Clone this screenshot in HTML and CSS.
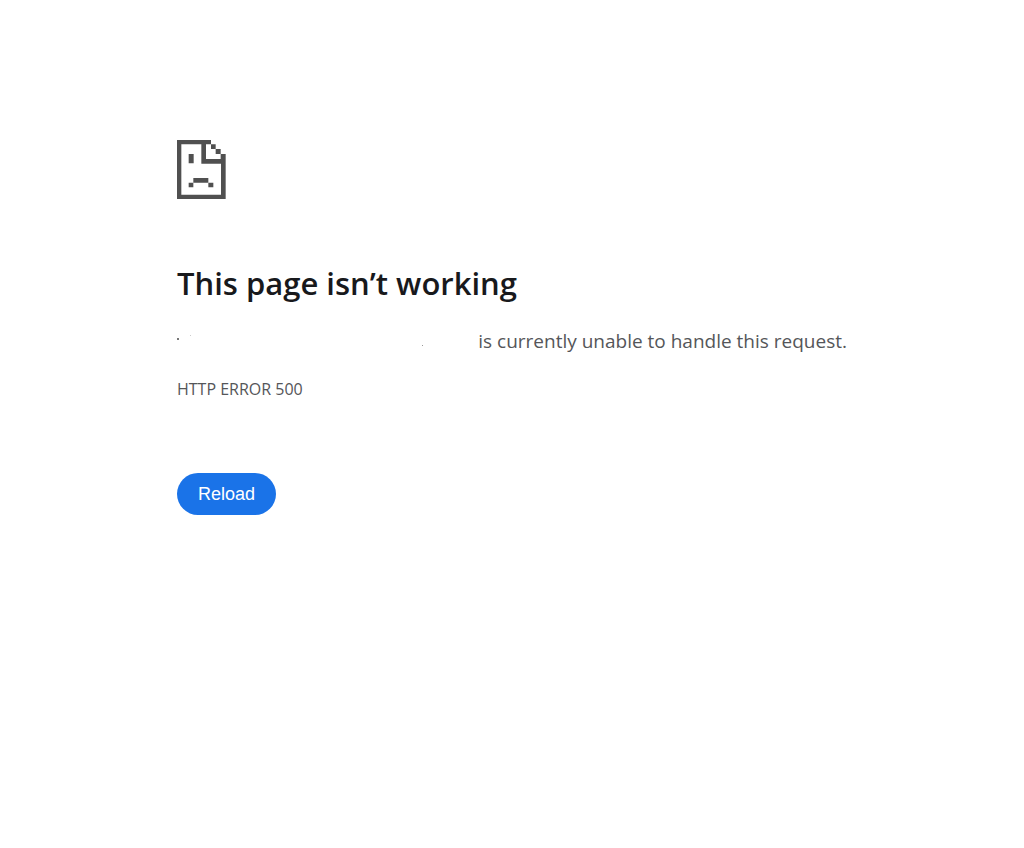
FILE: index.html
```html
<!DOCTYPE html>
<html lang="en">
<head>
<meta charset="utf-8">
<meta name="viewport" content="width=device-width, initial-scale=1">
<title>This page isn’t working</title>
<link rel="stylesheet" href="styles.css">
</head>
<body>
<main class="error-page">
  <svg class="error-icon" viewBox="0 0 147 177" aria-hidden="true">
    <path fill="#505050" d="M0 0H102V13H116V27H131V42H146V177H0ZM13 13V164H132V71H73V13ZM87 13V57H131V42H116V27H102V13Z" fill-rule="evenodd"/>
    <path fill="#505050" d="M35 42H50V70H35ZM49 114H94V128H109V142H94V128H49V142H35V128H49Z"/>
  </svg>
  <h1 class="title">This page isn’t working</h1>
  <p class="summary">
    <svg class="host" viewBox="0 0 290 28" aria-hidden="true">
      <path fill="#777" d="M0 11h2v2h-2z"/>
      <path fill="#ccc" d="M13 8h1v1h-1z"/>
      <path fill="#999" d="M245 18h1v1h-1z"/>
    </svg>
    <span>is currently unable to handle this request.</span>
  </p>
  <p class="code">HTTP ERROR 500</p>
  <button class="reload" type="button">Reload</button>
</main>
</body>
</html>
```
FILE: styles.css
```css
* { box-sizing: border-box; }

body {
  margin: 0;
  background: #fff;
  color: #555659;
  font-family: "Segoe UI", "Open Sans", "Noto Sans", sans-serif;
}

.error-page {
  display: flex;
  flex-direction: column;
  align-items: flex-start;
  max-width: 670px;
  margin: 0 auto;
  padding-top: 140px;
}

.error-icon {
  width: 49px;
  height: 59px;
}

.title {
  margin: 64px 0 24px;
  color: #18191c;
  font-size: 31px;
  font-weight: 600;
  line-height: 40px;
}

.summary {
  display: flex;
  justify-content: space-between;
  width: 100%;
  margin: 0;
  font-size: 19px;
  line-height: 28px;
}

.host {
  flex: none;
  width: 290px;
  height: 28px;
}

.code {
  margin: 22px 0 72px;
  font-size: 16px;
  line-height: 24px;
}

.reload {
  padding: 0 21px;
  border: 0;
  border-radius: 21px;
  background: #1a73e8;
  color: #fff;
  font-family: Arial, "Liberation Sans", sans-serif;
  font-size: 18px;
  line-height: 42px;
}
```
